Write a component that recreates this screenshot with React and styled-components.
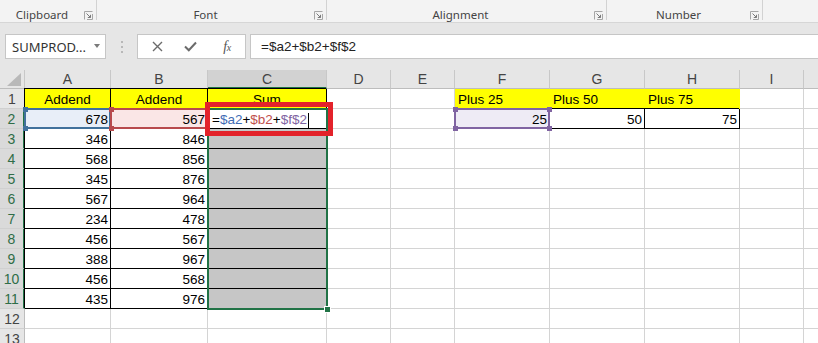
import React from 'react';
import styled, { createGlobalStyle } from 'styled-components';

const GlobalStyle = createGlobalStyle`
  html, body { margin: 0; padding: 0; background: #ffffff; }
  body { overflow: hidden; }
`;

const CELL_FONT = `"Liberation Sans", Arial, sans-serif`;
const UI_FONT = `"Noto Sans", "Open Sans", sans-serif`;
const YELLOW = '#ffff00';
const GREEN = '#217346';

const COLS = [
  { key: 'A', w: 86 },
  { key: 'B', w: 97 },
  { key: 'C', w: 119 },
  { key: 'D', w: 64 },
  { key: 'E', w: 64 },
  { key: 'F', w: 95 },
  { key: 'G', w: 95 },
  { key: 'H', w: 95 },
  { key: 'I', w: 64 },
  { key: 'J', w: 64, offscreen: true },
];
const ROWHEAD_W = 25;
const HEAD_H = 19;
const ROW_H = 20;
const ROW_COUNT = 13;

const colLeft = (key) => {
  let x = ROWHEAD_W;
  for (const c of COLS) {
    if (c.key === key) return x;
    x += c.w;
  }
  return x;
};
const colWidth = (key) => COLS.find((c) => c.key === key).w;
const rowTop = (r) => HEAD_H + (r - 1) * ROW_H;

const A_VALS = [678, 346, 568, 345, 567, 234, 456, 388, 456, 435];
const B_VALS = [567, 846, 856, 876, 964, 478, 567, 967, 568, 976];

/* ---------- layout ---------- */
const Root = styled.div`
  width: 818px;
  height: 343px;
  overflow: hidden;
  background: #e6e6e6;
  display: flex;
  flex-direction: column;
`;

/* ---------- ribbon ---------- */
const Ribbon = styled.div`
  display: flex;
  height: 23px;
  box-sizing: border-box;
  background: #f3f3f3;
  border-bottom: 1px solid #d6d6d6;
  flex: none;
`;
const Group = styled.div`
  width: ${(p) => p.$w}px;
  flex: ${(p) => (p.$w ? 'none' : '1')};
  display: flex;
  align-items: flex-start;
  height: 22px;
`;
const GroupLabel = styled.div`
  flex: 1;
  text-align: center;
  padding-top: 7px;
  line-height: 16px;
  font-family: ${UI_FONT};
  font-size: 11.5px;
  color: #444;
  white-space: nowrap;
`;
const Launcher = styled.svg`
  width: 9px;
  height: 9px;
  margin-top: 11px;
  margin-right: 3px;
  flex: none;
`;
const GroupSep = styled.div`
  width: 1px;
  height: 20px;
  background: #d2d2d2;
  flex: none;
`;

const LauncherIcon = () => (
  <Launcher viewBox="0 0 9 9">
    <path d="M0.5 8.5 V0.5 H8.5" fill="none" stroke="#a6a6a6" strokeWidth="1" />
    <path d="M8.5 3 V8.5 H3" fill="none" stroke="#a6a6a6" strokeWidth="1" />
    <path d="M2.5 2.5 L6.5 6.5 M6.5 3.8 V6.5 H3.8" fill="none" stroke="#7a7a7a" strokeWidth="1" />
  </Launcher>
);

/* ---------- formula bar ---------- */
const FormulaRow = styled.div`
  display: flex;
  align-items: stretch;
  height: 25px;
  padding: 11px 0 11px 5px;
  flex: none;
`;
const WhiteBox = styled.div`
  box-sizing: border-box;
  background: #ffffff;
  border: 1px solid #c6c6c6;
`;
const NameBox = styled(WhiteBox)`
  width: 101px;
  display: flex;
  align-items: center;
  padding: 0 5px 0 6px;
  font-family: ${UI_FONT};
  font-size: 13px;
  color: #333;
`;
const NameText = styled.span`
  flex: 1;
  white-space: nowrap;
`;
const DropArrow = styled.span`
  width: 0;
  height: 0;
  border-left: 3.5px solid transparent;
  border-right: 3.5px solid transparent;
  border-top: 4px solid #7a7a7a;
  margin-bottom: 2px;
`;
const Grip = styled.div`
  width: 31px;
  display: flex;
  flex-direction: column;
  align-items: center;
  justify-content: center;
  gap: 3px;
`;
const GripDot = styled.span`
  width: 2px;
  height: 2px;
  background: #b8b8b8;
`;
const FuncBox = styled(WhiteBox)`
  width: 109px;
  display: grid;
  grid-template-columns: 38px 28px 46px;
  align-items: center;
  justify-items: center;
  overflow: hidden;
`;
const FxText = styled.span`
  font-family: "Liberation Serif", "DejaVu Serif", serif;
  font-style: italic;
  font-size: 14px;
  color: #555;
  letter-spacing: -0.5px;
  & small {
    font-size: 10px;
  }
`;
const FormulaInput = styled(WhiteBox)`
  flex: 1;
  margin-left: 4px;
  border-right: none;
  padding-left: 10px;
  font-family: ${CELL_FONT};
  font-size: 13.5px;
  line-height: 23px;
  color: #222;
  white-space: nowrap;
`;

/* ---------- sheet ---------- */
const Sheet = styled.div`
  position: relative;
  flex: none;
`;
const Grid = styled.div`
  display: grid;
  grid-template-columns: ${ROWHEAD_W}px ${COLS.map((c) => c.w + 'px').join(' ')};
  grid-template-rows: ${HEAD_H}px;
  grid-auto-rows: ${ROW_H}px;
  background: #ffffff;
  font-family: ${CELL_FONT};
  font-size: 13.5px;
`;
const Corner = styled.div`
  box-sizing: border-box;
  background: #e6e6e6;
  border-right: 1px solid #c8c8c8;
  border-bottom: 1px solid #bdbdbd;
  display: flex;
  align-items: flex-end;
  justify-content: flex-end;
  padding: 0 3px 2px 0;
`;
const CornerTri = styled.span`
  width: 0;
  height: 0;
  border-left: 14px solid transparent;
  border-bottom: 13px solid #b9b9b9;
`;
const ColHead = styled.div`
  box-sizing: border-box;
  background: ${(p) => (p.$sel ? '#d2d2d2' : '#e6e6e6')};
  border-right: 1px solid #c8c8c8;
  border-bottom: ${(p) => (p.$sel ? `2px solid ${GREEN}` : '1px solid #bdbdbd')};
  display: flex;
  align-items: center;
  justify-content: center;
  color: #444;
  font-size: 14px;
`;
const RowHead = styled.div`
  box-sizing: border-box;
  background: ${(p) => (p.$sel ? '#dadada' : '#e6e6e6')};
  border-right: ${(p) => (p.$sel ? `2px solid ${GREEN}` : '1px solid #bdbdbd')};
  border-bottom: 1px solid #d0d0d0;
  display: flex;
  align-items: center;
  justify-content: center;
  color: ${(p) => (p.$sel ? '#2f6d47' : '#444')};
  font-size: 14px;
`;
const Cell = styled.div`
  box-sizing: border-box;
  background: ${(p) => p.$fill || '#ffffff'};
  border-right: 1px solid ${(p) => (p.$boxed ? '#000' : p.$fill || '#d4d4d4')};
  border-bottom: 1px solid ${(p) => (p.$boxed ? '#000' : p.$fill || '#d4d4d4')};
  box-shadow: ${(p) => (p.$boxed ? '-1px -1px 0 0 #000' : 'none')};
  display: flex;
  align-items: flex-end;
  justify-content: ${(p) =>
    p.$align === 'right' ? 'flex-end' : p.$align === 'center' ? 'center' : 'flex-start'};
  padding: 0 2px 0 ${(p) => (p.$align === 'left' ? '3px' : '2px')};
  line-height: 16px;
  color: #000;
  white-space: nowrap;
  overflow: hidden;
`;
const EditText = styled.span`
  display: inline-flex;
  align-items: center;
  padding-left: 1px;
`;
const Part = styled.span`
  color: ${(p) => p.$c || '#000'};
`;
const Caret = styled.span`
  display: inline-block;
  width: 1px;
  height: 15px;
  background: #000;
  margin-left: 1px;
`;

/* ---------- overlays ---------- */
const RefBox = styled.div`
  position: absolute;
  box-sizing: border-box;
  border: 2px solid ${(p) => p.$c};
  pointer-events: none;
`;
const Handle = styled.span`
  position: absolute;
  width: 5px;
  height: 5px;
  background: ${(p) => p.$c};
  ${(p) => (p.$v === 'top' ? 'top: -3.5px;' : 'bottom: -3.5px;')}
  ${(p) => (p.$h === 'left' ? 'left: -3.5px;' : 'right: -3.5px;')}
`;
const FillHandle = styled.span`
  position: absolute;
  width: 5px;
  height: 5px;
  right: -4.5px;
  bottom: -4.5px;
  background: ${GREEN};
  border: 1px solid #fff;
`;
const Annotation = styled.div`
  position: absolute;
  box-sizing: border-box;
  border: 5px solid #e3222a;
  pointer-events: none;
`;

const REFS = [
  { col: 'A', row: 2, c: '#41719c', handles: ['tl', 'bl'] },
  { col: 'B', row: 2, c: '#b84a4d', handles: ['tl', 'tr', 'bl', 'br'] },
  { col: 'F', row: 2, c: '#8064a2', handles: ['tl', 'tr', 'bl', 'br'] },
];

const EDIT_PARTS = [
  { t: '=', c: '#000' },
  { t: '$a2', c: '#3f6db5' },
  { t: '+', c: '#000' },
  { t: '$b2', c: '#c0504d' },
  { t: '+', c: '#000' },
  { t: '$f$2', c: '#8064a2' },
];

function cellSpec(row, col) {
  if (row === 1) {
    if (col === 'A' || col === 'B') return { v: 'Addend', fill: YELLOW, boxed: true, align: 'center' };
    if (col === 'C') return { v: 'Sum', fill: YELLOW, boxed: true, align: 'center' };
    if (col === 'F') return { v: 'Plus 25', fill: YELLOW, align: 'left' };
    if (col === 'G') return { v: 'Plus 50', fill: YELLOW, align: 'left' };
    if (col === 'H') return { v: 'Plus 75', fill: YELLOW, align: 'left' };
    return {};
  }
  if (row >= 2 && row <= 11) {
    const i = row - 2;
    if (col === 'A') return { v: A_VALS[i], boxed: true, align: 'right', fill: row === 2 ? '#e8eef8' : null };
    if (col === 'B') return { v: B_VALS[i], boxed: true, align: 'right', fill: row === 2 ? '#fae6e6' : null };
    if (col === 'C') {
      if (row === 2) return { edit: true, boxed: true, align: 'left' };
      return { boxed: true, fill: '#c6c6c6' };
    }
  }
  if (row === 2) {
    if (col === 'F') return { v: 25, boxed: true, align: 'right', fill: '#eeebf5' };
    if (col === 'G') return { v: 50, boxed: true, align: 'right' };
    if (col === 'H') return { v: 75, boxed: true, align: 'right' };
  }
  return {};
}

const RIBBON_GROUPS = [
  { label: 'Clipboard', w: 97 },
  { label: 'Font', w: 230 },
  { label: 'Alignment', w: 280 },
  { label: 'Number', w: 156 },
];

export default function App() {
  const rows = Array.from({ length: ROW_COUNT }, (_, i) => i + 1);
  const selLeft = colLeft('C') - 1;
  const selTop = rowTop(2) - 1;

  return (
    <>
      <GlobalStyle />
      <Root>
        <Ribbon>
          {RIBBON_GROUPS.map((g) => (
            <Group key={g.label} $w={g.w}>
              <GroupLabel>{g.label}</GroupLabel>
              <LauncherIcon />
              <GroupSep />
            </Group>
          ))}
          <Group />
        </Ribbon>

        <FormulaRow>
          <NameBox>
            <NameText>SUMPROD...</NameText>
            <DropArrow />
          </NameBox>
          <Grip>
            <GripDot />
            <GripDot />
            <GripDot />
          </Grip>
          <FuncBox>
            <svg width="11" height="11" viewBox="0 0 11 11">
              <path d="M1 1 L10 10 M10 1 L1 10" stroke="#6b6b6b" strokeWidth="1.4" fill="none" />
            </svg>
            <svg width="13" height="11" viewBox="0 0 13 11">
              <path d="M1 5.5 L4.8 9.3 L12 1.5" stroke="#6b6b6b" strokeWidth="2" fill="none" />
            </svg>
            <FxText>
              f<small>x</small>
            </FxText>
          </FuncBox>
          <FormulaInput>=$a2+$b2+$f$2</FormulaInput>
        </FormulaRow>

        <Sheet>
          <Grid>
            <Corner>
              <CornerTri />
            </Corner>
            {COLS.map((c) => (
              <ColHead key={c.key} $sel={c.key === 'C'}>
                {c.offscreen ? null : c.key}
              </ColHead>
            ))}
            {rows.map((r) => (
              <React.Fragment key={r}>
                <RowHead $sel={r >= 2 && r <= 11}>{r}</RowHead>
                {COLS.map((c) => {
                  const s = cellSpec(r, c.key);
                  return (
                    <Cell key={c.key} $fill={s.fill} $boxed={s.boxed} $align={s.align || 'left'}>
                      {s.edit ? (
                        <EditText>
                          {EDIT_PARTS.map((p, i) => (
                            <Part key={i} $c={p.c}>
                              {p.t}
                            </Part>
                          ))}
                          <Caret />
                        </EditText>
                      ) : (
                        s.v
                      )}
                    </Cell>
                  );
                })}
              </React.Fragment>
            ))}
          </Grid>

          {REFS.map((r) => (
            <RefBox
              key={r.col}
              $c={r.c}
              style={{
                left: colLeft(r.col) - 1,
                top: rowTop(r.row) - 1,
                width: colWidth(r.col) + 1,
                height: ROW_H + 1,
              }}
            >
              {r.handles.map((h) => (
                <Handle
                  key={h}
                  $c={r.c}
                  $v={h[0] === 't' ? 'top' : 'bottom'}
                  $h={h[1] === 'l' ? 'left' : 'right'}
                />
              ))}
            </RefBox>
          ))}

          <RefBox
            $c={GREEN}
            style={{
              left: selLeft,
              top: selTop,
              width: colWidth('C') + 2,
              height: ROW_H * 10 + 2,
            }}
          >
            <FillHandle />
          </RefBox>

          <Annotation
            style={{
              left: colLeft('C') - 3,
              top: rowTop(2) - 7,
              width: colWidth('C') + 9,
              height: 34,
            }}
          />
        </Sheet>
      </Root>
    </>
  );
}
